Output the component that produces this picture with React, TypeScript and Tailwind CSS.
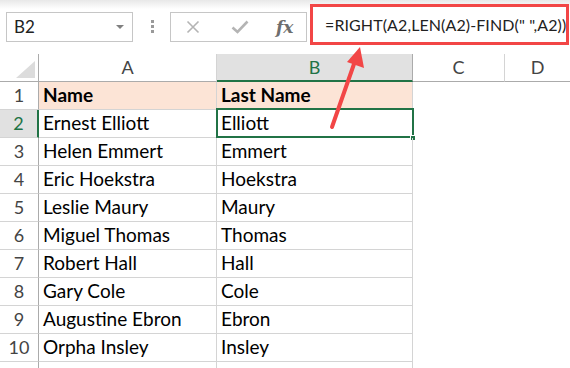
import React from "react";

const rows: [string, string][] = [
  ["Ernest Elliott", "Elliott"],
  ["Helen Emmert", "Emmert"],
  ["Eric Hoekstra", "Hoekstra"],
  ["Leslie Maury", "Maury"],
  ["Miguel Thomas", "Thomas"],
  ["Robert Hall", "Hall"],
  ["Gary Cole", "Cole"],
  ["Augustine Ebron", "Ebron"],
  ["Orpha Insley", "Insley"],
];

const font = { fontFamily: "Lato, 'Open Sans', sans-serif" };

export default function App() {
  return (
    <div
      className="relative w-[570px] h-[368px] overflow-hidden bg-white text-black"
      style={font}
    >
      {/* Toolbar */}
      <div className="relative h-[54px] bg-white">
        <div className="absolute left-0 top-0 w-full h-[9px] bg-gradient-to-b from-[#e8e8e8] to-white" />
        <div className="relative flex items-start">
          <div className="ml-[6px] mt-[12px] w-[127px] h-[30px] border border-[#c6c6c6] bg-white flex items-center justify-between pl-[7px] pr-[8px]">
            <span className="text-[17px] text-[#222]">B2</span>
            <span className="w-0 h-0 border-l-[4px] border-r-[4px] border-t-[4px] border-l-transparent border-r-transparent border-t-[#808080]" />
          </div>
          <div className="ml-[18px] mt-[20px] flex flex-col gap-[2px]">
            <span className="w-[3px] h-[3px] bg-[#9a9a9a]" />
            <span className="w-[3px] h-[3px] bg-[#9a9a9a]" />
            <span className="w-[3px] h-[3px] bg-[#9a9a9a]" />
          </div>
          <div className="ml-[16px] mt-[12px] w-[137px] h-[30px] border border-[#c6c6c6] bg-white flex items-center">
            <svg className="ml-[15px]" width="14" height="14" viewBox="0 0 14 14">
              <path d="M1.5 1.5 L12.5 12.5 M12.5 1.5 L1.5 12.5" stroke="#b4b4b4" strokeWidth="1.6" fill="none" />
            </svg>
            <svg className="ml-[31px]" width="18" height="14" viewBox="0 0 18 14">
              <path d="M1.5 7.5 L6.5 12 L16.5 1.5" stroke="#b4b4b4" strokeWidth="2.6" fill="none" />
            </svg>
            <span
              className="ml-[27px] text-[17px] italic font-bold text-[#6e6e6e] leading-none"
              style={{ fontFamily: "'DejaVu Serif', 'Liberation Serif', serif" }}
            >
              fx
            </span>
          </div>
          <div className="ml-[3px] mt-[4px] w-[259px] h-[41px] border-[3px] border-[#f24646] bg-white flex items-center pl-[12px]">
            <span className="text-[16px] text-[#222] whitespace-nowrap tracking-[0.1px]">
              =RIGHT(A2,LEN(A2)-FIND(" ",A2))
            </span>
          </div>
        </div>
      </div>

      {/* Column headers */}
      <div className="flex h-[28px] text-[18px] text-[#444]">
        <div className="relative w-[39px] border-r border-b border-[#ababab] bg-white">
          <svg className="absolute right-[3px] bottom-[3px]" width="19" height="17" viewBox="0 0 19 17">
            <polygon points="19,0 19,17 0,17" fill="#dcdcdc" />
          </svg>
        </div>
        <div className="w-[178px] border-r border-b border-[#ababab] border-r-[#d4d4d4] flex items-center justify-center">
          A
        </div>
        <div className="w-[196px] border-r border-r-[#ababab] border-b-2 border-b-[#217346] bg-[#e1e1e1] flex items-center justify-center text-[#217346]">
          B
        </div>
        <div className="w-[92px] border-r border-r-[#d4d4d4] border-b border-b-[#ababab] flex items-center justify-center">
          C
        </div>
        <div className="w-[65px] border-b border-b-[#ababab] flex items-center justify-center">
          D
        </div>
      </div>

      {/* Row 1 header */}
      <div className="flex h-[28px] text-[19px]">
        <div className="w-[39px] border-r border-b border-r-[#ababab] border-b-[#d4d4d4] flex items-center justify-center text-[#444] text-[18px]">
          1
        </div>
        <div className="w-[178px] border-r border-b border-[#d4d4d4] bg-[#fce4d6] flex items-center pl-[4px] font-bold">
          Name
        </div>
        <div className="w-[196px] border-r border-b border-[#d4d4d4] bg-[#fce4d6] flex items-center pl-[4px] font-bold">
          Last Name
        </div>
      </div>

      {rows.map(([a, b], i) => {
        const n = i + 2;
        const sel = n === 2;
        return (
          <div key={n} className="flex h-[28px] text-[19px]">
            <div
              className={
                sel
                  ? "w-[39px] border-r-2 border-b border-r-[#217346] border-b-[#d4d4d4] bg-[#e1e1e1] flex items-center justify-center text-[#217346] text-[18px]"
                  : "w-[39px] border-r border-b border-r-[#ababab] border-b-[#d4d4d4] flex items-center justify-center text-[#444] text-[18px]"
              }
            >
              {n}
            </div>
            <div className="w-[178px] border-r border-b border-[#d4d4d4] flex items-center pl-[4px]">
              {a}
            </div>
            <div className="relative w-[196px] border-r border-b border-[#d4d4d4] flex items-center pl-[4px]">
              {b}
              {sel && (
                <>
                  <div className="absolute left-[-1px] top-[-2px] right-[-2px] bottom-[-1px] border-2 border-[#217346]" />
                  <div className="absolute right-[-4px] bottom-[-4px] w-[6px] h-[6px] bg-[#217346] border border-white" />
                </>
              )}
            </div>
          </div>
        );
      })}

      <div className="flex h-[28px]">
        <div className="w-[39px] border-r border-[#ababab]" />
        <div className="w-[178px] border-r border-[#d4d4d4]" />
        <div className="w-[196px] border-r border-[#d4d4d4]" />
      </div>

      {/* Arrow */}
      <svg className="absolute left-0 top-0 pointer-events-none" width="570" height="368">
        <line x1="332" y1="127" x2="354" y2="64" stroke="#f24646" strokeWidth="4" strokeLinecap="round" />
        <polygon points="360,47 364,68 347,62" fill="#f24646" />
      </svg>
    </div>
  );
}
